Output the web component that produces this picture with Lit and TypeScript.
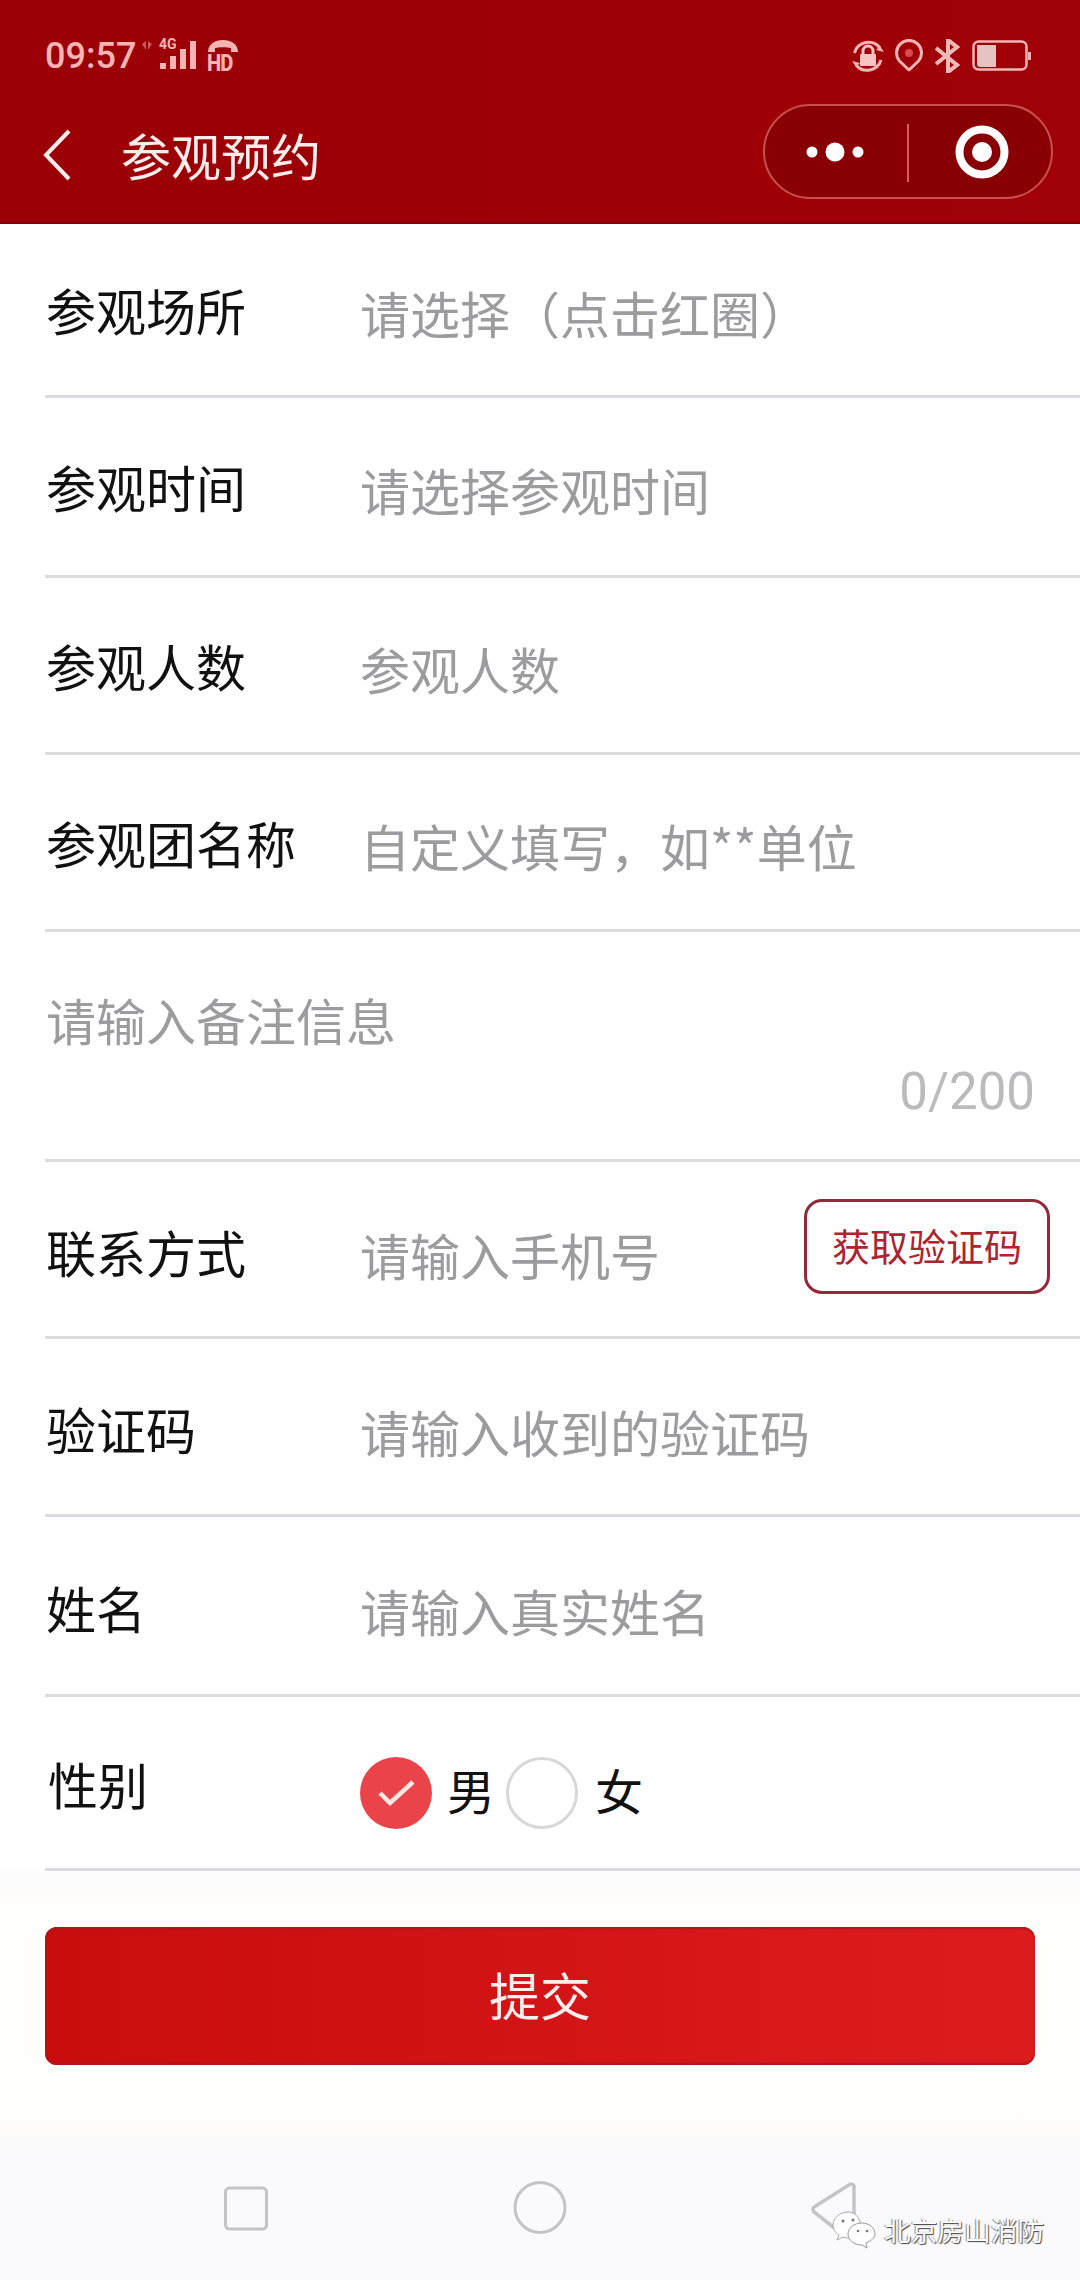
import { LitElement, html, css, svg } from "lit";
import { customElement } from "lit/decorators.js";

interface Row { label: string; hint: string; h: number; }

const TOP: Row[] = [
  { label: "参观场所", hint: "请选择（点击红圈）", h: 174 },
  { label: "参观时间", hint: "请选择参观时间", h: 180 },
  { label: "参观人数", hint: "参观人数", h: 177 },
  { label: "参观团名称", hint: "自定义填写，如**单位", h: 177 },
];
const BOTTOM: Row[] = [
  { label: "验证码", hint: "请输入收到的验证码", h: 178 },
  { label: "姓名", hint: "请输入真实姓名", h: 180 },
];

@customElement("app-root")
export class AppRoot extends LitElement {
  static styles = css`
    :host { display: block; width: 1080px; height: 2280px; overflow: hidden; background: #fff;
      font-family: "Noto Sans CJK SC", "Noto Sans", sans-serif; color: #111; }
    .page { display: flex; flex-direction: column; height: 2280px; }
    .head { height: 224px; flex: none; background: linear-gradient(90deg, #9a0006, #a00007); display: flex; flex-direction: column; box-sizing: border-box; border-bottom: 2px solid #86000a; }
    .status { height: 104px; flex: none; display: flex; align-items: center; justify-content: space-between; padding: 8px 48px 0 45px; box-sizing: border-box; color: #f6b4b2; }
    .sleft, .sright { display: flex; align-items: center; }
    .time { width: 95px; font-family: Roboto, sans-serif; font-weight: 500; font-size: 36px; line-height: 40px; letter-spacing: 0; }
    .net { position: relative; width: 60px; height: 34px; }
    .net svg { position: absolute; left: 0; top: 0; }
    .g4 { position: absolute; left: 19px; top: -3px; font: 700 14px/16px Roboto, sans-serif; }
    .hd { position: relative; width: 32px; height: 34px; margin-left: 7px; }
    .hd svg { position: absolute; left: 0; top: 0; }
    .hd span { position: absolute; left: 0; top: 13px; font: 800 24px/22px Roboto, sans-serif; letter-spacing: -1px; transform: scaleX(.84); transform-origin: left; }
    .sright svg { display: block; }
    .nav { flex: 1; display: flex; align-items: center; padding: 0 27px 18px 42px; }
    .back { flex: none; }
    .title { margin-left: 49px; margin-bottom: 2px; flex: 1; color: #fdeeec; font-size: 50px; line-height: 60px; }
    .capsule { flex: none; width: 290px; height: 95px; margin-bottom: 6px; box-sizing: border-box; border: 2px solid #c95050; border-radius: 48px; background: #890004; display: flex; align-items: center; justify-content: center; }
    .row { flex: none; display: flex; align-items: center; position: relative; margin-left: 45px; box-sizing: border-box; border-bottom: 3px solid #dcdce0; padding-top: 5px; }
    .row.low { padding-top: 9px; }
    .row.gender { padding-top: 8px; }
    .label { flex: none; width: 314px; margin-left: 1px; font-size: 50px; line-height: 60px; margin-top: -6px; white-space: nowrap; }
    .hint { font-size: 50px; line-height: 60px; color: #9c9c9f; white-space: nowrap; }
    .note { flex: none; height: 230px; margin-left: 45px; border-bottom: 3px solid #dcdce0; box-sizing: border-box; display: flex; flex-direction: column; padding-top: 57px; }
    .note .hint { margin-left: 1px; }
    .count { align-self: flex-end; margin: 14px 45px 0 0; font: 400 51px/58px Roboto, sans-serif; color: #bbbbbe; }
    .code { position: absolute; right: 30px; top: 37px; box-sizing: border-box; width: 246px; height: 95px; border: 3px solid #94293a; border-radius: 18px; background: #fff; color: #ab2430; font-size: 38px; line-height: 86px; text-align: center; }
    .sex { flex: none; width: 312px; margin-left: 3px; margin-top: -8px; font-size: 50px; line-height: 60px; white-space: nowrap; }
    .radios { display: flex; align-items: center; margin-top: 12px; }
    .radio { width: 72px; height: 72px; flex: none; border-radius: 50%; box-sizing: border-box; }
    .radio.on { background: #ea444a; display: flex; align-items: center; justify-content: center; }
    .radio.off { border: 3px solid #d8d8da; margin-left: 11px; }
    .opt { font-size: 48px; line-height: 60px; margin-left: 15px; margin-bottom: 8px; }
    .opt.f { margin-left: 17px; }
    .foot { flex: 1; display: flex; flex-direction: column; background: linear-gradient(#fcfbfd 0, #fffefa 40px, #fffefa 240px, #faf9fb 285px); }
    .submit { margin: 56px 45px 0; height: 138px; flex: none; border-radius: 12px; background: linear-gradient(90deg, #c90c0d, #dd1c20); box-shadow: inset 0 2px 2px #a81a1e, inset 0 -2px 2px #a81a1e; color: #fdeeee; font-size: 51px; line-height: 134px; text-align: center; }
    .mark { position: absolute; left: 832px; top: 2211px; display: flex; align-items: center; }
    .mark span { margin-left: 8px; color: #fff; font-size: 26.7px; line-height: 36px; white-space: nowrap; text-shadow: 1px 1px 1px #444, -1px 0 1px #888; }
    .abs { position: absolute; left: 0; top: 0; pointer-events: none; }
  `;

  private row(r: Row, low = false) {
    return html`<div class="row ${low ? "low" : ""}" style="height:${r.h}px">
      <div class="label">${r.label}</div><div class="hint">${r.hint}</div>
    </div>`;
  }

  private dots() {
    return svg`<svg width="286" height="91" viewBox="0 0 286 91">
      <circle cx="47" cy="46" r="5.5" fill="#fff"/><circle cx="70" cy="46" r="9.5" fill="#fff"/><circle cx="93" cy="46" r="5.5" fill="#fff"/>
      <rect x="142" y="18" width="2" height="58" fill="#d8605c"/>
      <circle cx="217" cy="46" r="22.5" fill="none" stroke="#fff" stroke-width="8"/><circle cx="217" cy="46" r="10" fill="#fff"/>
    </svg>`;
  }

  render() {
    return html`<div class="page">
      <div class="head">
        <div class="status">
          <div class="sleft">
            <div class="time">09:57</div>
            <div class="net">
              <svg width="60" height="34" viewBox="0 0 60 34" fill="#f6b4b2">
                <path d="M2 5l4-3v9zM8 2l4 3-4 6z" opacity=".5"/>
                <rect x="20" y="24" width="6" height="6"/><rect x="30" y="17" width="6" height="13"/><rect x="40" y="10" width="6" height="20"/><rect x="50" y="2" width="6" height="28"/>
              </svg>
              <span class="g4">4G</span>
            </div>
            <div class="hd">
              <svg width="32" height="16" viewBox="0 0 32 16"><path d="M1 13C1 5 8 1 16 1s15 4 15 12h-7V9c-4-1-12-1-16 0v4z" fill="#f6b4b2"/></svg>
              <span>HD</span>
            </div>
          </div>
          <div class="sright">
            <svg width="34" height="34" viewBox="0 0 34 34" fill="none">
              <path d="M30 21A14.500 14.500 0 0 1 5 26M3.500 14A14.500 14.500 0 0 1 29 9" stroke="#f6b4b2" stroke-width="3"/>
              <path d="M1 22l4 6 4-4zM33 13l-4-6-4 4z" fill="#f6b4b2"/>
              <rect x="9" y="15" width="16" height="12" rx="1" fill="#f2c4c2"/>
              <path d="M12 15v-3a5 5 0 0 1 10 0v3" stroke="#f2c4c2" stroke-width="3"/>
            </svg>
            <svg style="margin-left:10px" width="28" height="34" viewBox="0 0 28 34" fill="none">
              <path d="M14 31L4.500 22A12.500 12.500 0 1 1 23.500 22z" stroke="#f6b4b2" stroke-width="3" stroke-linejoin="round"/>
              <circle cx="14" cy="14" r="4" fill="#d84a50"/>
            </svg>
            <svg style="margin-left:11px" width="26" height="34" viewBox="0 0 26 34" fill="none">
              <path d="M2 9l21 17-9 7V1l9 7L2 25" stroke="#f2b8b6" stroke-width="4"/>
            </svg>
            <svg style="margin-left:12px" width="60" height="32" viewBox="0 0 60 32" fill="none">
              <rect x="1.500" y="1.500" width="53" height="28" rx="5" stroke="#f6b4b2" stroke-width="2.500"/>
              <path d="M5 5h19v22H8a3 3 0 0 1-3-3z" fill="#e6c2c2"/>
              <rect x="56" y="12" width="3" height="8" fill="#f6b4b2"/>
            </svg>
          </div>
        </div>
        <div class="nav">
          <svg class="back" width="30" height="52" viewBox="0 0 30 52" fill="none"><path d="M27 2L4 26l23 24" stroke="#fdeeec" stroke-width="4"/></svg>
          <div class="title">参观预约</div>
          <div class="capsule">${this.dots()}</div>
        </div>
      </div>

      ${TOP.map((r) => this.row(r))}

      <div class="note">
        <div class="hint">请输入备注信息</div>
        <div class="count">0/200</div>
      </div>

      <div class="row low" style="height:177px">
        <div class="label">联系方式</div><div class="hint">请输入手机号</div>
        <div class="code">获取验证码</div>
      </div>

      ${BOTTOM.map((r) => this.row(r, true))}

      <div class="row gender" style="height:174px">
        <div class="sex">性别</div>
        <div class="radios">
          <div class="radio on">
            <svg width="37" height="26" viewBox="0 0 37 26" fill="none"><path d="M2 13l10 10L35 2" stroke="#fde8e2" stroke-width="4.500"/></svg>
          </div>
          <div class="opt">男</div>
          <div class="radio off"></div>
          <div class="opt f">女</div>
        </div>
      </div>

      <div class="foot">
        <div class="submit">提交</div>
      </div>

      <svg class="abs" width="1080" height="2280" viewBox="0 0 1080 2280" fill="none">
        <rect x="225.500" y="2188" width="41" height="41" rx="4" stroke="#c4c4c6" stroke-width="3"/>
        <circle cx="540" cy="2207.500" r="25" stroke="#c4c4c6" stroke-width="3"/>
        <path d="M854 2186a3 3 0 0 0-5-1l-35 22a4 4 0 0 0 0 5l28 22" stroke="#c4c4c6" stroke-width="3.500" stroke-linecap="round"/>
        <path d="M854 2186v40" stroke="#c4c4c6" stroke-width="3.500"/>
      </svg>
      <div class="mark">
        <svg width="44" height="38" viewBox="0 0 44 38">
          <path d="M16 1C8 1 1 7 1 14c0 4 2 7 6 10l-2 5 6-3 4 1C21 27 30 20 28 11 26 5 22 1 16 1z" fill="#fff" stroke="#aaa"/>
          <path d="M30 12c-8 0-14 5-14 11s6 11 14 11l5 3-1-5c5-2 9-5 9-9 0-6-6-11-13-11z" fill="#fff" stroke="#999"/>
          <circle cx="11" cy="10" r="1.500" fill="#777"/><circle cx="21" cy="9" r="1.500" fill="#777"/>
          <circle cx="26" cy="20" r="1.300" fill="#777"/><circle cx="35" cy="20" r="1.300" fill="#777"/>
        </svg>
        <span>北京房山消防</span>
      </div>
    </div>`;
  }
}
